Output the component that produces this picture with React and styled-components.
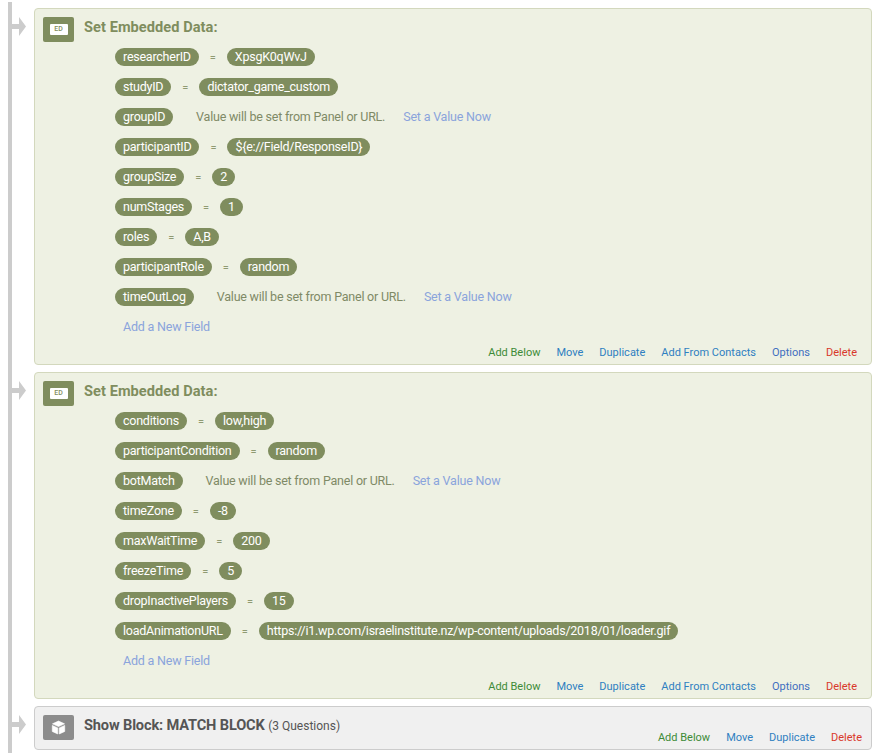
import React from "react";
import styled, { createGlobalStyle } from "styled-components";

const Global = createGlobalStyle`
  html, body { margin: 0; padding: 0; background: #fff; }
  body { font-family: Roboto, "Liberation Sans", sans-serif; }
`;
const Flow = styled.div`
  margin: 2px 0 0 8px; width: 864px; height: 751px; overflow: hidden;
  border-left: 4px solid #ccc; display: flex; flex-direction: column; gap: 7px; padding-top: 6px; box-sizing: border-box;
`;
const Item = styled.div`display: flex; align-items: flex-start;`;
const Arrow = styled.svg`width: 22px; height: 19px; margin-top: 9px; flex: none; display: block;`;
const Card = styled.div`
  flex: 1; box-sizing: border-box; border-radius: 4px; position: relative;
  background: ${p => p.$gray ? "#f0f0f0" : "#eef1e3"};
  border: 1px solid ${p => p.$gray ? "#ccc" : "#d3d8bd"};
  height: ${p => p.$h}px;
  ${p => p.$gray ? "display: flex; justify-content: space-between;" : ""}
`;
const Header = styled.div`display: flex; align-items: center; gap: 10px; padding: 8px 0 0 8px; height: 25px;`;
const IconBox = styled.div`
  width: 31px; height: 25px; border-radius: 2px; flex: none; display: flex; align-items: center; justify-content: center;
  background: ${p => p.$gray ? "#8c8c8c" : "#7f8d5e"};
`;
const EdTag = styled.span`
  width: 18px; height: 11px; background: #fff; border-radius: 1px; color: #7f8d5e; font-size: 7px; line-height: 11px;
  text-align: center; font-weight: 500;
`;
const Title = styled.div`
  font-size: 14.6px; font-weight: 700; color: ${p => p.$gray ? "#555" : "#7f8d5e"}; white-space: nowrap; padding-bottom: 5px;
  letter-spacing: ${p => p.$gray ? "-0.15px" : "0.05px"};
`;
const Count = styled.span`font-size: 12px; font-weight: 400; letter-spacing: 0;`;
const Rows = styled.div`padding-left: 80px;`;
const Row = styled.div`height: 30px; display: flex; align-items: center;`;
const Pill = styled.span`
  height: 18px; line-height: 18px; padding: 0 8px; border-radius: 9px; background: #7f8d5e; color: #fff;
  font-size: 12.5px; letter-spacing: -0.24px; white-space: nowrap;
`;
const Eq = styled.span`margin: 0 11px; font-size: 11px; color: #8f9a72;`;
const Note = styled.span`margin-left: 23px; font-size: 12.5px; letter-spacing: -0.22px; color: #7f8a66; white-space: nowrap; padding-bottom: 1px;`;
const Link = styled.span`
  margin-left: ${p => p.$ml || 0}px; font-size: 12.5px; letter-spacing: -0.2px; color: #8aa4dc; white-space: nowrap; padding-bottom: 1px;
`;
const Actions = styled.div`
  display: flex; gap: 16px; justify-content: flex-end; padding-right: 14px; height: 20px; align-items: center;
  ${p => p.$end ? "align-self: flex-end; height: 24px; padding-right: 9px;" : ""}
`;
const Action = styled.span`font-size: 11px; color: ${p => p.$c}; white-space: nowrap;`;

const PATH = "M0 7h7V0l7 9.5-7 9.5v-7H0z";

const block1 = [
  ["researcherID", "XpsgK0qWvJ"], ["studyID", "dictator_game_custom"], ["groupID"],
  ["participantID", "${e://Field/ResponseID}"], ["groupSize", "2"], ["numStages", "1"],
  ["roles", "A,B"], ["participantRole", "random"], ["timeOutLog"],
];
const block2 = [
  ["conditions", "low,high"], ["participantCondition", "random"], ["botMatch"], ["timeZone", "-8"],
  ["maxWaitTime", "200"], ["freezeTime", "5"], ["dropInactivePlayers", "15"],
  ["loadAnimationURL", "https://i1.wp.com/israelinstitute.nz/wp-content/uploads/2018/01/loader.gif"],
];

const Connector = () => (
  <Arrow viewBox="0 0 22 19"><path d={PATH} fill="#ccc" /></Arrow>
);

const EdBlock = ({ rows, h }) => (
  <Item>
    <Connector />
    <Card $h={h}>
      <Header>
        <IconBox><EdTag>ED</EdTag></IconBox>
        <Title>Set Embedded Data:</Title>
      </Header>
      <Rows>
        {rows.map(([k, v]) => (
          <Row key={k}>
            <Pill>{k}</Pill>
            {v ? (<><Eq>=</Eq><Pill>{v}</Pill></>) : (
              <><Note>Value will be set from Panel or URL.</Note><Link $ml={18}>Set a Value Now</Link></>
            )}
          </Row>
        ))}
        <Row><Link $ml={8}>Add a New Field</Link></Row>
      </Rows>
      <Actions>
        <Action $c="#3d8b37">Add Below</Action>
        <Action $c="#2f7fc1">Move</Action>
        <Action $c="#2f7fc1">Duplicate</Action>
        <Action $c="#2f7fc1">Add From Contacts</Action>
        <Action $c="#3f6fc0">Options</Action>
        <Action $c="#d9392b">Delete</Action>
      </Actions>
    </Card>
  </Item>
);

export default function App() {
  return (
    <>
      <Global />
      <Flow>
        <EdBlock rows={block1} h={357} />
        <EdBlock rows={block2} h={327} />
        <Item>
          <Connector />
          <Card $gray $h={44}>
            <Header>
              <IconBox $gray>
                <svg width="15" height="15" viewBox="0 0 14 14" fill="#fff" stroke="#fff" strokeWidth="0.6" strokeLinejoin="round">
                  <path d="M7 1 12.6 3.6 7 6.1 1.4 3.6z" /><path d="M1.2 5.1 6.3 7.4V13L1.2 10.7z" /><path d="M12.8 5.1 7.7 7.4V13L12.8 10.7z" />
                </svg>
              </IconBox>
              <Title $gray>Show Block: MATCH BLOCK <Count>(3 Questions)</Count></Title>
            </Header>
            <Actions $end>
              <Action $c="#3d8b37">Add Below</Action>
              <Action $c="#2f7fc1">Move</Action>
              <Action $c="#2f7fc1">Duplicate</Action>
              <Action $c="#d9392b">Delete</Action>
            </Actions>
          </Card>
        </Item>
      </Flow>
    </>
  );
}
